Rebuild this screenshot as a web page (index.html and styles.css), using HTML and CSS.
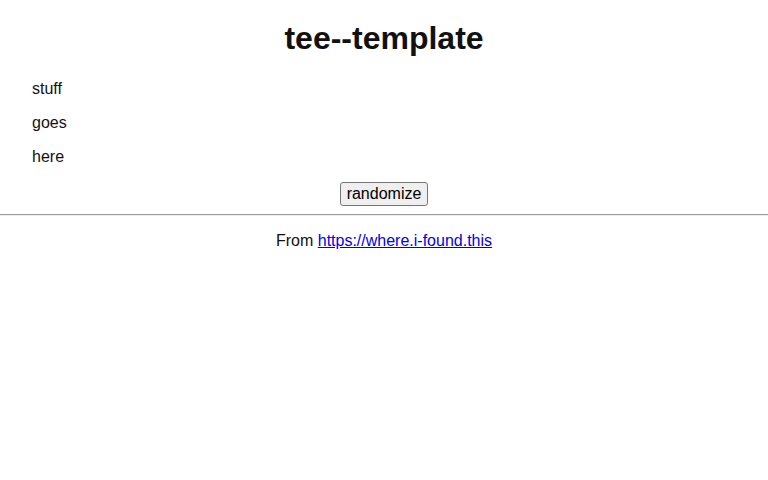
FILE: index.html
```html
<!DOCTYPE html>
<html lang="en">
<head>
<meta charset="utf-8">
<title>tee--template</title>
<link rel="stylesheet" href="styles.css">
</head>
<body>
  <main class="page">
    <h1 class="title">tee--template</h1>
    <div class="items">
      <p class="item">stuff</p>
      <p class="item">goes</p>
      <p class="item">here</p>
    </div>
    <div class="actions">
      <button class="btn" type="button">randomize</button>
    </div>
  </main>
  <hr class="rule">
  <footer class="footer">
    <p class="source">From <a class="source-link" href="#">https://where.i-found.this</a></p>
  </footer>
</body>
</html>
```

FILE: styles.css
```css
html, body {
  margin: 0;
  padding: 0;
  background: #fff;
}

body {
  font-family: "Liberation Sans", Arial, sans-serif;
  font-size: 16px;
  line-height: 18px;
  color: #111;
}

.title {
  margin: 20px 0 23px;
  font-size: 32px;
  line-height: 37px;
  font-weight: bold;
  text-align: center;
}

.items {
  padding: 0 32px;
}

.item {
  margin: 16px 0;
}

.item:first-child {
  margin-top: 0;
}

.actions {
  display: flex;
  justify-content: center;
}

.btn {
  font-family: "Liberation Sans", Arial, sans-serif;
  font-size: 16px;
  line-height: 18px;
  color: #000;
  background: #efefef;
  border: 1px solid #767676;
  border-radius: 3px;
  padding: 2px 6px;
}

.rule {
  margin: 8px 0 0;
  height: 0;
  border: 0;
  border-top: 1px solid #9a9a9a;
  border-bottom: 1px solid #eeeeee;
}

.footer {
  text-align: center;
}

.source {
  margin: 16px 0;
}

.source-link {
  color: #0000ee;
  text-decoration: underline;
}
```
